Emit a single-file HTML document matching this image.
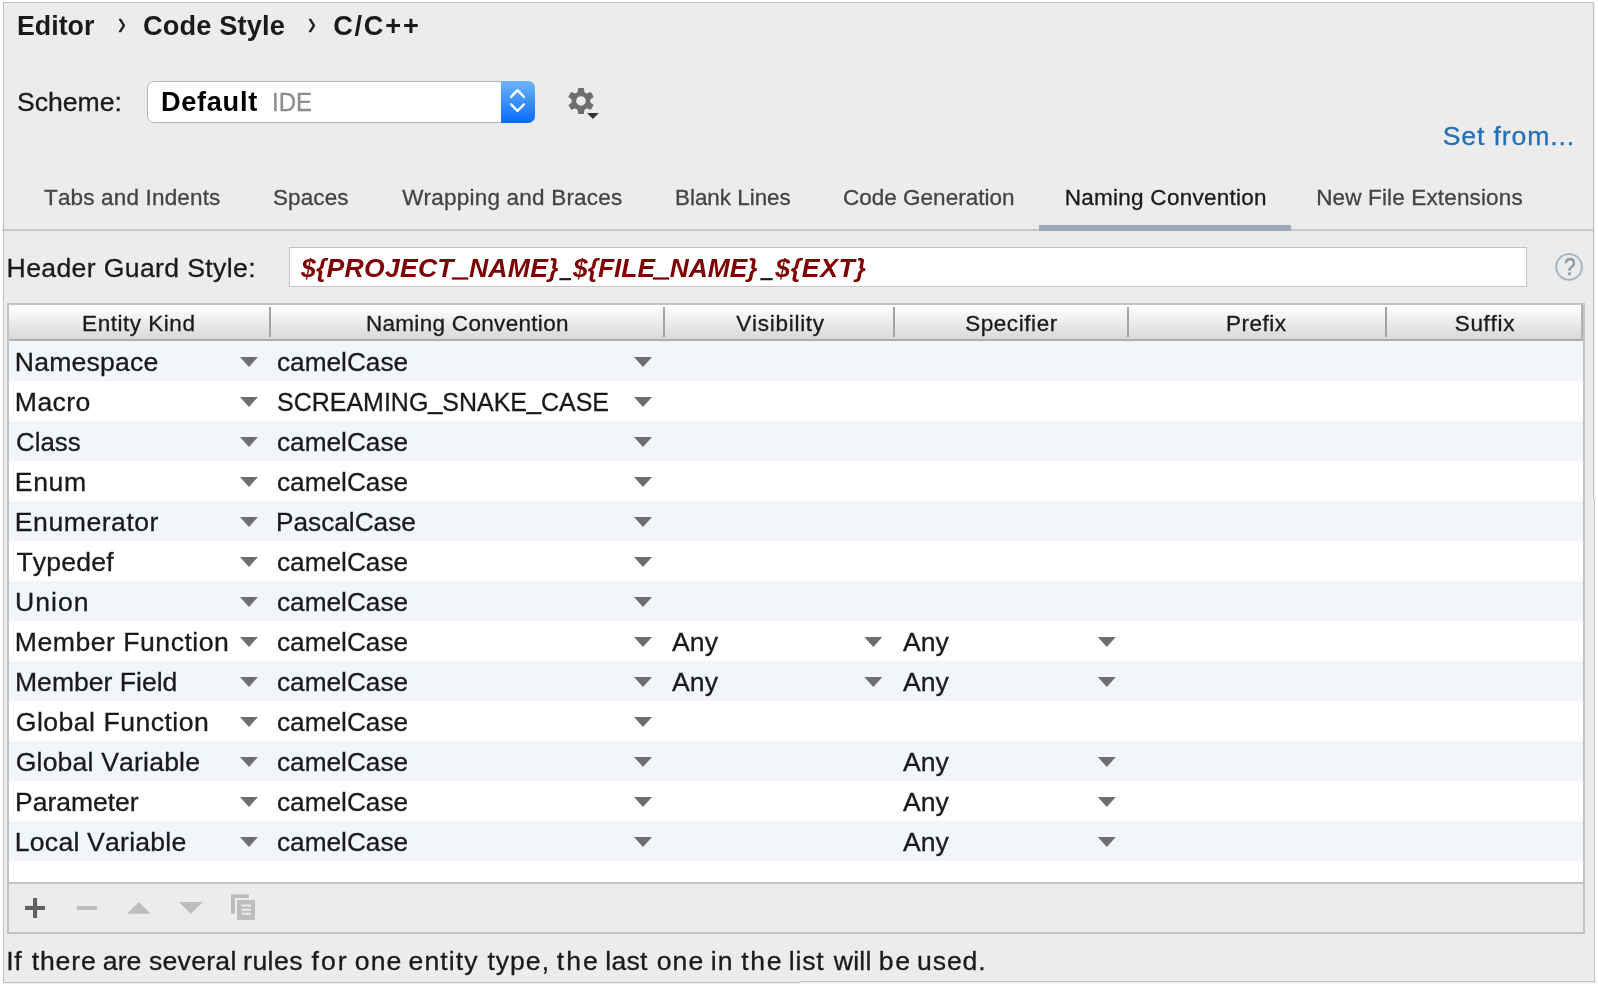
<!DOCTYPE html>
<html lang="en">
<head>
<meta charset="utf-8">
<title>Code Style - C/C++ - Naming Convention</title>
<style>
html,body{margin:0;padding:0;background:#fff;}
body{width:1598px;height:987px;position:relative;overflow:hidden;font-family:"Liberation Sans",sans-serif;font-kerning:none;}
.abs{position:absolute;}
div{position:absolute;box-sizing:border-box;}
.t{position:absolute;white-space:pre;font-kerning:none;transform-origin:0 0;}
.u{position:relative;top:-0.07em;-webkit-text-stroke:0.7px currentColor;}
.ub{top:-0.05em;-webkit-text-stroke:1.3px currentColor;}
#txt{left:0;top:0;width:1598px;height:987px;will-change:transform;}
#bg{left:3px;top:2px;width:1592px;height:982px;background:#ececec;}
.stripe{left:9px;width:1574px;height:40px;background:#f2f5f9;}
</style>
</head>
<body>
<div id="bg"></div>
<!-- outer frame -->
<div style="left:3px;top:2px;width:1591px;height:1px;background:#c1c1c1"></div>
<div style="left:3px;top:2px;width:1px;height:982px;background:#c1c1c1"></div>
<div style="left:1593px;top:2px;width:1px;height:497px;background:#c1c1c1"></div>
<div style="left:1594px;top:499px;width:1px;height:485px;background:#c1c1c1"></div>
<div style="left:3px;top:982px;width:797px;height:1px;background:#c1c1c1"></div>
<div style="left:800px;top:981px;width:796px;height:1px;background:#c1c1c1"></div>
<div style="left:800px;top:982px;width:795px;height:1px;background:#eeeeee"></div>
<div style="left:3px;top:983px;width:1592px;height:1px;background:#f4f4f4"></div>


<!-- scheme combo -->
<div style="left:147px;top:81px;width:388px;height:42px;border:1px solid #b6b6b6;border-radius:7px;background:#fff;"></div>
<div style="left:501px;top:81px;width:34px;height:42px;border-radius:0 7px 7px 0;background:linear-gradient(#70b5fa,#3d94fd 45%,#0a6bff);"></div>
<svg class="abs" style="left:501px;top:81px" width="35" height="42" fill="none" stroke="#fff" stroke-width="2.3" stroke-linecap="round" stroke-linejoin="round">
<polyline points="10.1,15.9 16.5,9.1 22.9,15.9"/>
<polyline points="10.1,23.4 16.5,29.9 22.9,23.4"/>
</svg>
<!-- gear -->
<svg class="abs" style="left:560px;top:80px" width="50" height="45" viewBox="560 80 50 45">
<g fill="#6e6e6e">
<g transform="translate(581 100.95)">
<path fill-rule="evenodd" d="M0,-9.5A9.5,9.5 0 1 1 0,9.5A9.5,9.5 0 1 1 0,-9.5ZM0,-4.8A4.8,4.8 0 1 0 0,4.8A4.8,4.8 0 1 0 0,-4.8Z"/>
<path d="M-2.5,-13H2.5Q2.9,-13 2.95,-12.6L3.4,-8.3H-3.4L-2.95,-12.6Q-2.9,-13 -2.5,-13Z"/>
<path d="M-2.5,-13H2.5Q2.9,-13 2.95,-12.6L3.4,-8.3H-3.4L-2.95,-12.6Q-2.9,-13 -2.5,-13Z" transform="rotate(60)"/>
<path d="M-2.5,-13H2.5Q2.9,-13 2.95,-12.6L3.4,-8.3H-3.4L-2.95,-12.6Q-2.9,-13 -2.5,-13Z" transform="rotate(120)"/>
<path d="M-2.5,-13H2.5Q2.9,-13 2.95,-12.6L3.4,-8.3H-3.4L-2.95,-12.6Q-2.9,-13 -2.5,-13Z" transform="rotate(180)"/>
<path d="M-2.5,-13H2.5Q2.9,-13 2.95,-12.6L3.4,-8.3H-3.4L-2.95,-12.6Q-2.9,-13 -2.5,-13Z" transform="rotate(240)"/>
<path d="M-2.5,-13H2.5Q2.9,-13 2.95,-12.6L3.4,-8.3H-3.4L-2.95,-12.6Q-2.9,-13 -2.5,-13Z" transform="rotate(300)"/>
</g>
</g>
<polygon points="587,113 598.8,113 592.9,119" fill="#333"/>
</svg>

<!-- tabs line + selected underline -->
<div style="left:2px;top:229px;width:1592px;height:2px;background:#c7c7c7"></div>
<div style="left:1039px;top:225px;width:252px;height:6px;background:#9ca7b8"></div>

<!-- header guard field -->
<div style="left:289px;top:247px;width:1238px;height:40px;background:#fff;border:1px solid #c4c4c4"></div>
<!-- help icon -->
<svg class="abs" style="left:1550px;top:248px" width="40" height="40" viewBox="1550 248 40 40">
<circle cx="1569.05" cy="266.95" r="12.85" fill="none" stroke="#a6b6c2" stroke-width="2"/>
</svg>

<!-- table panel -->
<div style="left:7px;top:303px;width:1578px;height:631px;border:2px solid #c2c2c2;background:#fff;"></div>
<!-- table header -->
<div style="left:9px;top:305px;width:1574px;height:34px;background:linear-gradient(#ffffff,#f7f7f7 25%,#e7e7e7 62%,#d9d9d9);"></div>
<div style="left:9px;top:339px;width:1574px;height:2px;background:#aeaeae"></div>
<div style="left:1581px;top:305px;width:2px;height:36px;background:#b2b2b2"></div>
<div class="sep" style="left:269px;top:307px;width:2px;height:30px;background:#a4a4a4"></div>
<div class="sep" style="left:663px;top:307px;width:2px;height:30px;background:#a4a4a4"></div>
<div class="sep" style="left:893px;top:307px;width:2px;height:30px;background:#a4a4a4"></div>
<div class="sep" style="left:1127px;top:307px;width:2px;height:30px;background:#a4a4a4"></div>
<div class="sep" style="left:1385px;top:307px;width:2px;height:30px;background:#a4a4a4"></div>
<div class="stripe" style="top:341px"></div><div class="stripe" style="top:421px"></div><div class="stripe" style="top:501px"></div><div class="stripe" style="top:581px"></div><div class="stripe" style="top:661px"></div><div class="stripe" style="top:741px"></div><div class="stripe" style="top:821px"></div>
<!-- toolbar -->
<div style="left:9px;top:882px;width:1574px;height:50px;background:#ececec;border-top:2px solid #c6c6c6"></div>
<svg class="abs" style="left:0;top:884px" width="280" height="48" viewBox="0 884 280 48">
<g fill="#606060"><rect x="33" y="898" width="4.1" height="20"/><rect x="25" y="905.9" width="20" height="4.1"/></g>
<g fill="#bdbdbd">
<rect x="77" y="905.9" width="20" height="4.1"/>
<polygon points="127,913.8 150.8,913.8 138.9,902"/>
<polygon points="178.8,902 202.8,902 190.8,913.8"/>
<path d="M231,894.2H248.8V898H234.9V913.8H231Z"/>
<path fill-rule="evenodd" d="M237,900.1H255V920H237ZM241.5,904.6V906.6H251V904.6ZM241.5,908.7V910.7H251V908.7ZM241.5,912.8V914.8H251V912.8Z"/>
</g>
</svg>
<svg class="abs" style="left:0;top:0" width="1598" height="987" fill="#6e6e6e"><polygon points="240.0,356.9 258.0,356.9 249.0,366.9"/><polygon points="634.0,356.9 652.0,356.9 643.0,366.9"/><polygon points="240.0,396.9 258.0,396.9 249.0,406.9"/><polygon points="634.0,396.9 652.0,396.9 643.0,406.9"/><polygon points="240.0,436.9 258.0,436.9 249.0,446.9"/><polygon points="634.0,436.9 652.0,436.9 643.0,446.9"/><polygon points="240.0,476.9 258.0,476.9 249.0,486.9"/><polygon points="634.0,476.9 652.0,476.9 643.0,486.9"/><polygon points="240.0,516.9 258.0,516.9 249.0,526.9"/><polygon points="634.0,516.9 652.0,516.9 643.0,526.9"/><polygon points="240.0,556.9 258.0,556.9 249.0,566.9"/><polygon points="634.0,556.9 652.0,556.9 643.0,566.9"/><polygon points="240.0,596.9 258.0,596.9 249.0,606.9"/><polygon points="634.0,596.9 652.0,596.9 643.0,606.9"/><polygon points="240.0,636.9 258.0,636.9 249.0,646.9"/><polygon points="634.0,636.9 652.0,636.9 643.0,646.9"/><polygon points="864.3,636.9 882.3,636.9 873.3,646.9"/><polygon points="1097.8,636.9 1115.8,636.9 1106.8,646.9"/><polygon points="240.0,676.9 258.0,676.9 249.0,686.9"/><polygon points="634.0,676.9 652.0,676.9 643.0,686.9"/><polygon points="864.3,676.9 882.3,676.9 873.3,686.9"/><polygon points="1097.8,676.9 1115.8,676.9 1106.8,686.9"/><polygon points="240.0,716.9 258.0,716.9 249.0,726.9"/><polygon points="634.0,716.9 652.0,716.9 643.0,726.9"/><polygon points="240.0,756.9 258.0,756.9 249.0,766.9"/><polygon points="634.0,756.9 652.0,756.9 643.0,766.9"/><polygon points="1097.8,756.9 1115.8,756.9 1106.8,766.9"/><polygon points="240.0,796.9 258.0,796.9 249.0,806.9"/><polygon points="634.0,796.9 652.0,796.9 643.0,806.9"/><polygon points="1097.8,796.9 1115.8,796.9 1106.8,806.9"/><polygon points="240.0,836.9 258.0,836.9 249.0,846.9"/><polygon points="634.0,836.9 652.0,836.9 643.0,846.9"/><polygon points="1097.8,836.9 1115.8,836.9 1106.8,846.9"/></svg>
<div id="txt"><span class="t" style="left:17.21px;top:10.20px;font-size:27.2px;line-height:31px;color:#1a1a1a;transform:scaleX(0.9851);font-weight:700;">Editor</span>
<span class="t" style="left:142.88px;top:10.20px;font-size:27.2px;line-height:31px;color:#1a1a1a;letter-spacing:0.175px;font-weight:700;">Code Style</span>
<span class="t" style="left:333.18px;top:10.20px;font-size:27.2px;line-height:31px;color:#1a1a1a;letter-spacing:1.752px;font-weight:700;">C/C++</span>
<span class="t" style="left:118.19px;top:4.10px;font-size:33.5px;line-height:37px;color:#1c1c1c;transform:scaleX(0.6997);-webkit-text-stroke:0.6px #1c1c1c;">›</span>
<span class="t" style="left:308.19px;top:4.10px;font-size:33.5px;line-height:37px;color:#1c1c1c;transform:scaleX(0.6997);-webkit-text-stroke:0.6px #1c1c1c;">›</span>
<span class="t" style="left:16.99px;top:87.00px;font-size:26.6px;line-height:30px;color:#1a1a1a;letter-spacing:0.003px;-webkit-text-stroke:0.3px #1a1a1a;">Scheme:</span>
<span class="t" style="left:160.98px;top:86.00px;font-size:27.2px;line-height:31px;color:#000;letter-spacing:0.678px;font-weight:700;">Default</span>
<span class="t" style="left:272.43px;top:87.00px;font-size:26.6px;line-height:30px;color:#8c8c8c;transform:scaleX(0.8990);-webkit-text-stroke:0.3px #8c8c8c;">IDE</span>
<span class="t" style="left:1442.74px;top:121.00px;font-size:26.6px;line-height:30px;color:#2470b3;letter-spacing:0.875px;-webkit-text-stroke:0.3px #2470b3;">Set from...</span>
<span class="t" style="left:44.04px;top:185.00px;font-size:22.5px;line-height:25px;color:#444;letter-spacing:0.163px;-webkit-text-stroke:0.3px #444;">Tabs and Indents</span>
<span class="t" style="left:273.03px;top:185.00px;font-size:22.5px;line-height:25px;color:#444;letter-spacing:0.097px;-webkit-text-stroke:0.3px #444;">Spaces</span>
<span class="t" style="left:402.15px;top:185.00px;font-size:22.5px;line-height:25px;color:#444;letter-spacing:0.208px;-webkit-text-stroke:0.3px #444;">Wrapping and Braces</span>
<span class="t" style="left:674.61px;top:185.00px;font-size:22.5px;line-height:25px;color:#444;transform:scaleX(0.9950);-webkit-text-stroke:0.3px #444;">Blank Lines</span>
<span class="t" style="left:843.01px;top:185.00px;font-size:22.5px;line-height:25px;color:#444;letter-spacing:0.010px;-webkit-text-stroke:0.3px #444;">Code Generation</span>
<span class="t" style="left:1064.80px;top:185.00px;font-size:22.5px;line-height:25px;color:#1a1a1a;letter-spacing:0.256px;-webkit-text-stroke:0.3px #1a1a1a;">Naming Convention</span>
<span class="t" style="left:1316.20px;top:185.00px;font-size:22.5px;line-height:25px;color:#444;letter-spacing:0.146px;-webkit-text-stroke:0.3px #444;">New File Extensions</span>
<span class="t" style="left:6.57px;top:253.30px;font-size:26.6px;line-height:30px;color:#1a1a1a;letter-spacing:0.363px;-webkit-text-stroke:0.3px #1a1a1a;">Header Guard Style:</span>
<span class="t" style="left:300.94px;top:253.00px;font-size:26.6px;line-height:30px;color:#7f0000;letter-spacing:0.242px;font-weight:700;font-style:italic;">${PROJECT<span class="u ub">_</span>NAME}</span>
<span class="t" style="left:559.80px;top:253.00px;font-size:26.6px;line-height:30px;color:#1a1a1a;transform:scaleX(0.7217);-webkit-text-stroke:0.3px #1a1a1a;-webkit-text-stroke:0.7px #1a1a1a;margin-top:-1.8px;">_</span>
<span class="t" style="left:573.24px;top:253.00px;font-size:26.6px;line-height:30px;color:#7f0000;transform:scaleX(0.9914);font-weight:700;font-style:italic;">${FILE<span class="u ub">_</span>NAME}</span>
<span class="t" style="left:761.02px;top:253.00px;font-size:26.6px;line-height:30px;color:#1a1a1a;transform:scaleX(0.7534);-webkit-text-stroke:0.3px #1a1a1a;-webkit-text-stroke:0.7px #1a1a1a;margin-top:-1.8px;">_</span>
<span class="t" style="left:775.24px;top:253.00px;font-size:26.6px;line-height:30px;color:#7f0000;letter-spacing:0.681px;font-weight:700;font-style:italic;">${EXT}</span>
<span class="t" style="left:1563.66px;top:254.10px;font-size:23.3px;line-height:26px;color:#8c98a3;transform:scaleX(0.9022);-webkit-text-stroke:0.5px #8c98a3;">?</span>
<span class="t" style="left:82.10px;top:311.00px;font-size:22.5px;line-height:25px;color:#1a1a1a;letter-spacing:0.524px;-webkit-text-stroke:0.3px #1a1a1a;">Entity Kind</span>
<span class="t" style="left:365.90px;top:311.00px;font-size:22.5px;line-height:25px;color:#1a1a1a;letter-spacing:0.312px;-webkit-text-stroke:0.3px #1a1a1a;">Naming Convention</span>
<span class="t" style="left:736.25px;top:311.00px;font-size:22.5px;line-height:25px;color:#1a1a1a;letter-spacing:0.731px;-webkit-text-stroke:0.3px #1a1a1a;">Visibility</span>
<span class="t" style="left:965.13px;top:311.00px;font-size:22.5px;line-height:25px;color:#1a1a1a;letter-spacing:0.570px;-webkit-text-stroke:0.3px #1a1a1a;">Specifier</span>
<span class="t" style="left:1226.00px;top:311.00px;font-size:22.5px;line-height:25px;color:#1a1a1a;letter-spacing:0.495px;-webkit-text-stroke:0.3px #1a1a1a;">Prefix</span>
<span class="t" style="left:1454.73px;top:311.00px;font-size:22.5px;line-height:25px;color:#1a1a1a;letter-spacing:0.678px;-webkit-text-stroke:0.3px #1a1a1a;">Suffix</span>
<span class="t" style="left:14.87px;top:346.80px;font-size:26.6px;line-height:30px;color:#1a1a1a;letter-spacing:0.179px;-webkit-text-stroke:0.3px #1a1a1a;">Namespace</span>
<span class="t" style="left:277.13px;top:346.80px;font-size:26.6px;line-height:30px;color:#1a1a1a;transform:scaleX(0.9852);-webkit-text-stroke:0.3px #1a1a1a;">camelCase</span>
<span class="t" style="left:14.87px;top:386.80px;font-size:26.6px;line-height:30px;color:#1a1a1a;letter-spacing:0.399px;-webkit-text-stroke:0.3px #1a1a1a;">Macro</span>
<span class="t" style="left:277.11px;top:386.80px;font-size:26.6px;line-height:30px;color:#1a1a1a;transform:scaleX(0.9398);-webkit-text-stroke:0.3px #1a1a1a;">SCREAMING<span class="u">_</span>SNAKE<span class="u">_</span>CASE</span>
<span class="t" style="left:15.73px;top:426.80px;font-size:26.6px;line-height:30px;color:#1a1a1a;transform:scaleX(0.9721);-webkit-text-stroke:0.3px #1a1a1a;">Class</span>
<span class="t" style="left:277.13px;top:426.80px;font-size:26.6px;line-height:30px;color:#1a1a1a;transform:scaleX(0.9852);-webkit-text-stroke:0.3px #1a1a1a;">camelCase</span>
<span class="t" style="left:14.87px;top:466.80px;font-size:26.6px;line-height:30px;color:#1a1a1a;letter-spacing:0.616px;-webkit-text-stroke:0.3px #1a1a1a;">Enum</span>
<span class="t" style="left:277.13px;top:466.80px;font-size:26.6px;line-height:30px;color:#1a1a1a;transform:scaleX(0.9852);-webkit-text-stroke:0.3px #1a1a1a;">camelCase</span>
<span class="t" style="left:14.87px;top:506.80px;font-size:26.6px;line-height:30px;color:#1a1a1a;letter-spacing:0.517px;-webkit-text-stroke:0.3px #1a1a1a;">Enumerator</span>
<span class="t" style="left:276.10px;top:506.80px;font-size:26.6px;line-height:30px;color:#1a1a1a;transform:scaleX(0.9858);-webkit-text-stroke:0.3px #1a1a1a;">PascalCase</span>
<span class="t" style="left:16.45px;top:546.80px;font-size:26.6px;line-height:30px;color:#1a1a1a;letter-spacing:0.191px;-webkit-text-stroke:0.3px #1a1a1a;">Typedef</span>
<span class="t" style="left:277.13px;top:546.80px;font-size:26.6px;line-height:30px;color:#1a1a1a;transform:scaleX(0.9852);-webkit-text-stroke:0.3px #1a1a1a;">camelCase</span>
<span class="t" style="left:15.00px;top:586.80px;font-size:26.6px;line-height:30px;color:#1a1a1a;letter-spacing:1.045px;-webkit-text-stroke:0.3px #1a1a1a;">Union</span>
<span class="t" style="left:277.13px;top:586.80px;font-size:26.6px;line-height:30px;color:#1a1a1a;transform:scaleX(0.9852);-webkit-text-stroke:0.3px #1a1a1a;">camelCase</span>
<span class="t" style="left:14.87px;top:626.80px;font-size:26.6px;line-height:30px;color:#1a1a1a;letter-spacing:0.503px;-webkit-text-stroke:0.3px #1a1a1a;">Member Function</span>
<span class="t" style="left:277.13px;top:626.80px;font-size:26.6px;line-height:30px;color:#1a1a1a;transform:scaleX(0.9852);-webkit-text-stroke:0.3px #1a1a1a;">camelCase</span>
<span class="t" style="left:672.00px;top:626.80px;font-size:26.6px;line-height:30px;color:#1a1a1a;letter-spacing:0.134px;-webkit-text-stroke:0.3px #1a1a1a;">Any</span>
<span class="t" style="left:902.90px;top:626.80px;font-size:26.6px;line-height:30px;color:#1a1a1a;transform:scaleX(0.9993);-webkit-text-stroke:0.3px #1a1a1a;">Any</span>
<span class="t" style="left:14.87px;top:666.80px;font-size:26.6px;line-height:30px;color:#1a1a1a;transform:scaleX(0.9987);-webkit-text-stroke:0.3px #1a1a1a;">Member Field</span>
<span class="t" style="left:277.13px;top:666.80px;font-size:26.6px;line-height:30px;color:#1a1a1a;transform:scaleX(0.9852);-webkit-text-stroke:0.3px #1a1a1a;">camelCase</span>
<span class="t" style="left:672.00px;top:666.80px;font-size:26.6px;line-height:30px;color:#1a1a1a;letter-spacing:0.134px;-webkit-text-stroke:0.3px #1a1a1a;">Any</span>
<span class="t" style="left:902.90px;top:666.80px;font-size:26.6px;line-height:30px;color:#1a1a1a;transform:scaleX(0.9993);-webkit-text-stroke:0.3px #1a1a1a;">Any</span>
<span class="t" style="left:15.71px;top:706.80px;font-size:26.6px;line-height:30px;color:#1a1a1a;letter-spacing:0.490px;-webkit-text-stroke:0.3px #1a1a1a;">Global Function</span>
<span class="t" style="left:277.13px;top:706.80px;font-size:26.6px;line-height:30px;color:#1a1a1a;transform:scaleX(0.9852);-webkit-text-stroke:0.3px #1a1a1a;">camelCase</span>
<span class="t" style="left:15.71px;top:746.80px;font-size:26.6px;line-height:30px;color:#1a1a1a;letter-spacing:0.175px;-webkit-text-stroke:0.3px #1a1a1a;">Global Variable</span>
<span class="t" style="left:277.13px;top:746.80px;font-size:26.6px;line-height:30px;color:#1a1a1a;transform:scaleX(0.9852);-webkit-text-stroke:0.3px #1a1a1a;">camelCase</span>
<span class="t" style="left:902.90px;top:746.80px;font-size:26.6px;line-height:30px;color:#1a1a1a;transform:scaleX(0.9993);-webkit-text-stroke:0.3px #1a1a1a;">Any</span>
<span class="t" style="left:14.88px;top:786.80px;font-size:26.6px;line-height:30px;color:#1a1a1a;transform:scaleX(0.9954);-webkit-text-stroke:0.3px #1a1a1a;">Parameter</span>
<span class="t" style="left:277.13px;top:786.80px;font-size:26.6px;line-height:30px;color:#1a1a1a;transform:scaleX(0.9852);-webkit-text-stroke:0.3px #1a1a1a;">camelCase</span>
<span class="t" style="left:902.90px;top:786.80px;font-size:26.6px;line-height:30px;color:#1a1a1a;transform:scaleX(0.9993);-webkit-text-stroke:0.3px #1a1a1a;">Any</span>
<span class="t" style="left:14.87px;top:826.80px;font-size:26.6px;line-height:30px;color:#1a1a1a;letter-spacing:0.215px;-webkit-text-stroke:0.3px #1a1a1a;">Local Variable</span>
<span class="t" style="left:277.13px;top:826.80px;font-size:26.6px;line-height:30px;color:#1a1a1a;transform:scaleX(0.9852);-webkit-text-stroke:0.3px #1a1a1a;">camelCase</span>
<span class="t" style="left:902.90px;top:826.80px;font-size:26.6px;line-height:30px;color:#1a1a1a;transform:scaleX(0.9993);-webkit-text-stroke:0.3px #1a1a1a;">Any</span>
<span class="t" style="left:6.20px;top:946.00px;font-size:26.6px;line-height:30px;color:#1a1a1a;letter-spacing:0.735px;-webkit-text-stroke:0.3px #1a1a1a;">If </span>
<span class="t" style="left:31.65px;top:946.00px;font-size:26.6px;line-height:30px;color:#1a1a1a;letter-spacing:0.864px;-webkit-text-stroke:0.3px #1a1a1a;">there </span>
<span class="t" style="left:102.82px;top:946.00px;font-size:26.6px;line-height:30px;color:#1a1a1a;letter-spacing:0.083px;-webkit-text-stroke:0.3px #1a1a1a;">are </span>
<span class="t" style="left:149.01px;top:946.00px;font-size:26.6px;line-height:30px;color:#1a1a1a;letter-spacing:0.262px;-webkit-text-stroke:0.3px #1a1a1a;">several </span>
<span class="t" style="left:243.08px;top:946.00px;font-size:26.6px;line-height:30px;color:#1a1a1a;letter-spacing:0.443px;-webkit-text-stroke:0.3px #1a1a1a;">rules </span>
<span class="t" style="left:311.47px;top:946.00px;font-size:26.6px;line-height:30px;color:#1a1a1a;letter-spacing:2.088px;-webkit-text-stroke:0.3px #1a1a1a;">for </span>
<span class="t" style="left:354.73px;top:946.00px;font-size:26.6px;line-height:30px;color:#1a1a1a;letter-spacing:1.159px;-webkit-text-stroke:0.3px #1a1a1a;">one </span>
<span class="t" style="left:408.62px;top:946.00px;font-size:26.6px;line-height:30px;color:#1a1a1a;letter-spacing:1.081px;-webkit-text-stroke:0.3px #1a1a1a;">entity </span>
<span class="t" style="left:487.45px;top:946.00px;font-size:26.6px;line-height:30px;color:#1a1a1a;letter-spacing:0.981px;-webkit-text-stroke:0.3px #1a1a1a;">type, </span>
<span class="t" style="left:556.75px;top:946.00px;font-size:26.6px;line-height:30px;color:#1a1a1a;letter-spacing:2.053px;-webkit-text-stroke:0.3px #1a1a1a;">the </span>
<span class="t" style="left:605.36px;top:946.00px;font-size:26.6px;line-height:30px;color:#1a1a1a;letter-spacing:0.231px;-webkit-text-stroke:0.3px #1a1a1a;">last </span>
<span class="t" style="left:656.73px;top:946.00px;font-size:26.6px;line-height:30px;color:#1a1a1a;letter-spacing:1.109px;-webkit-text-stroke:0.3px #1a1a1a;">one </span>
<span class="t" style="left:710.67px;top:946.00px;font-size:26.6px;line-height:30px;color:#1a1a1a;letter-spacing:1.104px;-webkit-text-stroke:0.3px #1a1a1a;">in </span>
<span class="t" style="left:741.25px;top:946.00px;font-size:26.6px;line-height:30px;color:#1a1a1a;letter-spacing:1.603px;-webkit-text-stroke:0.3px #1a1a1a;">the </span>
<span class="t" style="left:788.76px;top:946.00px;font-size:26.6px;line-height:30px;color:#1a1a1a;letter-spacing:0.793px;-webkit-text-stroke:0.3px #1a1a1a;">list </span>
<span class="t" style="left:833.79px;top:946.00px;font-size:26.6px;line-height:30px;color:#1a1a1a;letter-spacing:0.234px;-webkit-text-stroke:0.3px #1a1a1a;">will </span>
<span class="t" style="left:878.84px;top:946.00px;font-size:26.6px;line-height:30px;color:#1a1a1a;letter-spacing:1.709px;-webkit-text-stroke:0.3px #1a1a1a;">be </span>
<span class="t" style="left:917.12px;top:946.00px;font-size:26.6px;line-height:30px;color:#1a1a1a;letter-spacing:0.871px;-webkit-text-stroke:0.3px #1a1a1a;">used.</span></div>
</body>
</html>
